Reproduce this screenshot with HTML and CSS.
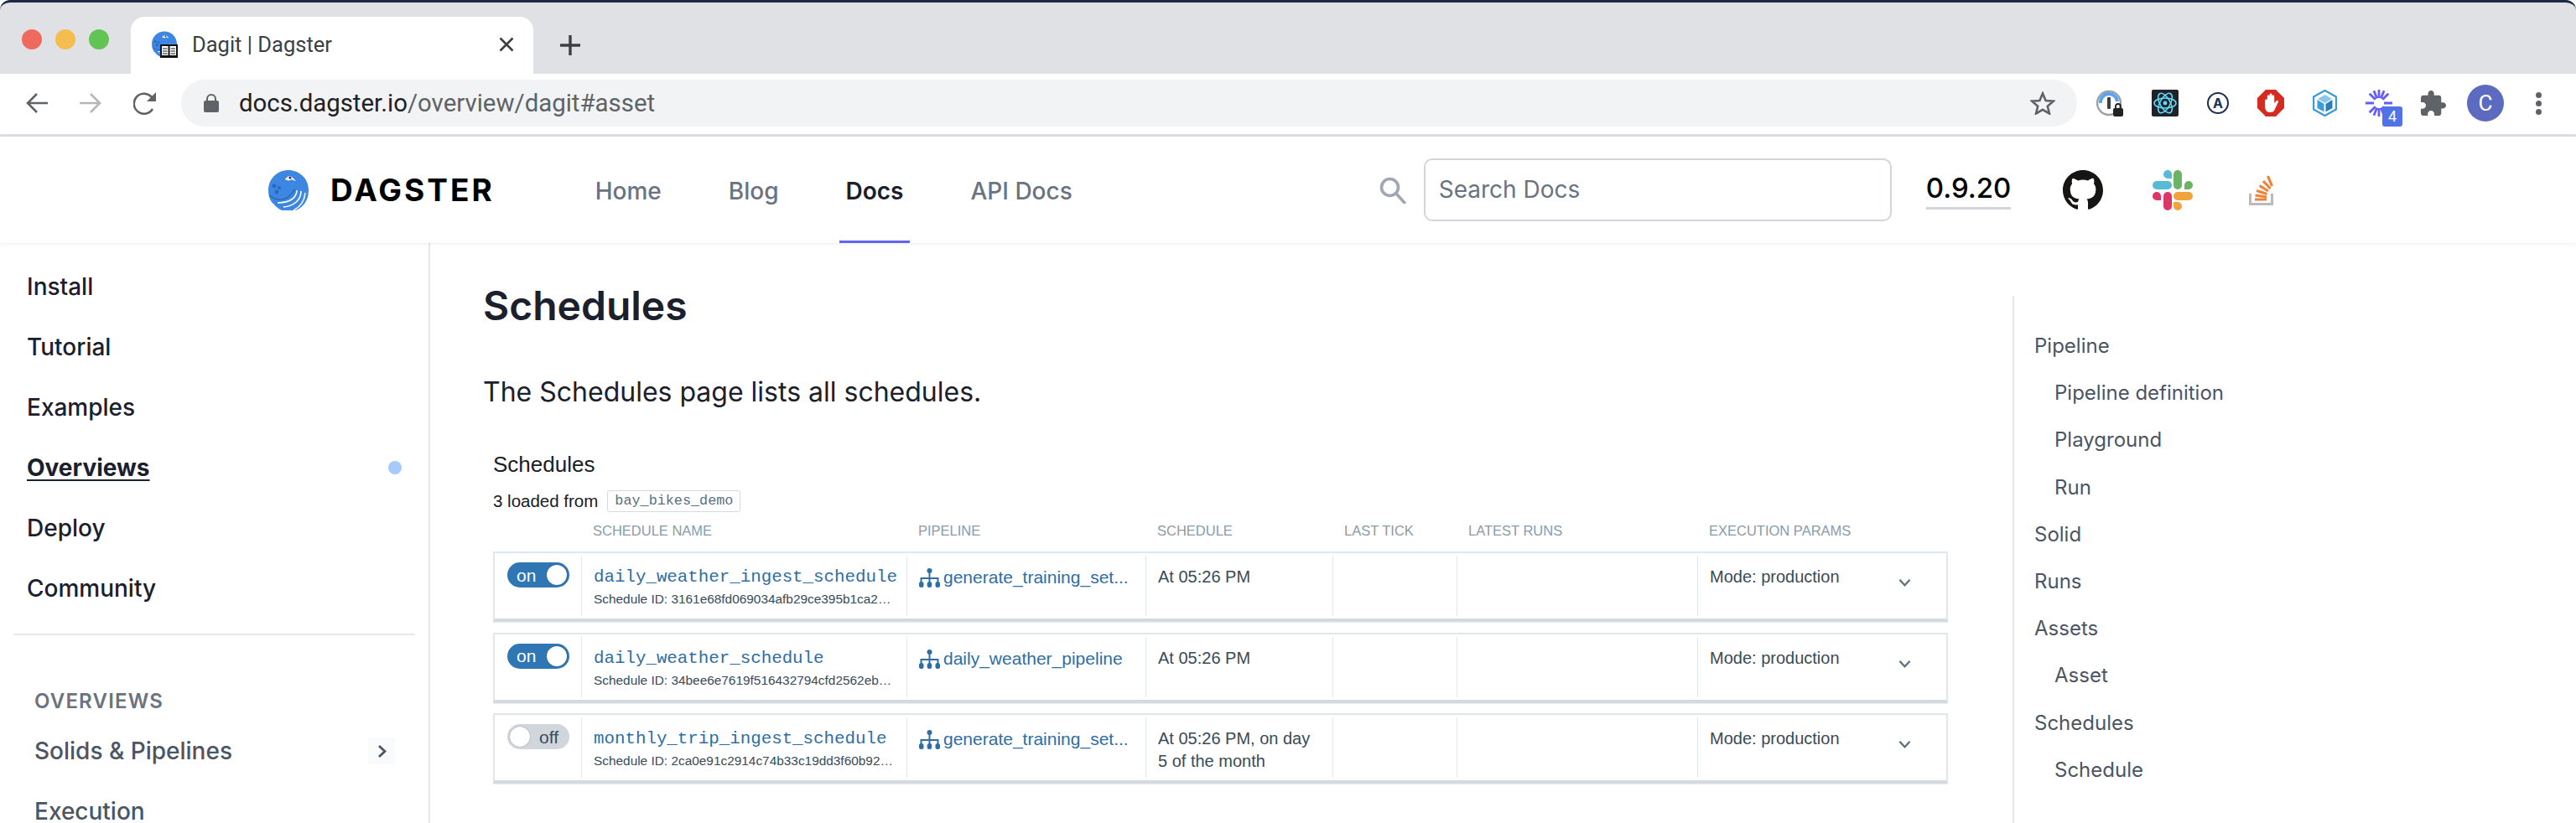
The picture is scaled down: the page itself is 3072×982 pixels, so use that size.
FILE: index.html
```html
<!DOCTYPE html>
<html>
  <head>
    <title>Dagit | Dagster</title>
    <link rel="stylesheet" href="styles.css">
  </head>
  <body>
    <svg class="defs" width="0" height="0">
      <symbol id="octopus" viewBox="0 0 48 48">
        <path d="M24 0C36 0 48 9 48 24C48 36 42 44 33 48H16C14 47 9 44 7 41C2 37 0 31 0 24C0 10 11 0 24 0Z" fill="#3d86e2"/>
        <path d="M2 30C8 37 20 37 27 29C29 27 30 24 32 23" fill="none" stroke="#2a67bd" stroke-width="1.5"/>
        <path d="M34 24C34 32 27 39 11 39" fill="none" stroke="#fff" stroke-width="1.6"/>
        <path d="M39 25C39 36 30 43 18 44" fill="none" stroke="#fff" stroke-width="1.6"/>
        <path d="M44 27C43 37 38 44 30 48" fill="none" stroke="#fff" stroke-width="1.6"/>
        <path d="M20 11C22 7 27 6 29 9L33 13C29 12 28 10 26 12C24 13 22 12 20 11Z" fill="#fff"/>
        <circle cx="26" cy="9" r="1.6" fill="#25324b"/>
        <circle cx="7" cy="19" r="2.4" fill="#2a67bd"/>
        <circle cx="13" cy="21" r="2" fill="#2a67bd"/>
        <circle cx="10" cy="26" r="2.4" fill="#2a67bd"/>
      </symbol>
      <symbol id="pipe" viewBox="0 0 25 23">
        <circle cx="12.5" cy="3" r="3" fill="#2f6ea5"/>
        <path d="M12.5 5v7M2.5 17v-5h20v5M12.5 12v5" fill="none" stroke="#2f6ea5" stroke-width="2"/>
        <rect x="0" y="16" width="5.5" height="7" rx="2.5" fill="#2f6ea5"/>
        <rect x="9.7" y="16" width="5.5" height="7" rx="2.5" fill="#2f6ea5"/>
        <rect x="19.5" y="16" width="5.5" height="7" rx="2.5" fill="#2f6ea5"/>
      </symbol>
      <symbol id="chev" viewBox="0 0 16 10">
        <path d="M1.5 1.5L8 8.5L14.5 1.5" fill="none" stroke="#5c7080" stroke-width="2.4"/>
      </symbol>
    </svg>

    <div class="tabstrip">
      <div class="lights">
        <span class="light red"></span><span class="light yellow"></span><span class="light green"></span>
      </div>
      <div class="tab">
        <span class="favicon">
          <svg width="30" height="31"><use href="#octopus"/></svg>
          <svg class="book" width="21" height="16" viewBox="0 0 21 16">
            <rect width="21" height="16" fill="#111"/>
            <rect x="2" y="2" width="7.5" height="11" fill="#fff"/>
            <rect x="11.5" y="2" width="7.5" height="11" fill="#fff"/>
            <path d="M3 5h5.5M3 8h5.5M3 11h5.5M12.5 5H18M12.5 8H18M12.5 11H18" stroke="#111"/>
          </svg>
        </span>
        <span class="tab-title">Dagit | Dagster</span>
        <svg class="tab-close" width="18" height="18" viewBox="0 0 18 18"><path d="M1.5 1.5L16.5 16.5M16.5 1.5L1.5 16.5" stroke="#3c4043" stroke-width="2.6"/></svg>
      </div>
      <svg class="new-tab" width="24" height="24" viewBox="0 0 24 24"><path d="M12 0V24M0 12H24" stroke="#3c4043" stroke-width="3.4"/></svg>
    </div>

    <div class="toolbar">
      <svg class="tool" width="26" height="26" viewBox="0 0 26 26"><path d="M26 13H3M13 2L2 13L13 24" fill="none" stroke="#5f6368" stroke-width="2.6"/></svg>
      <svg class="tool" width="26" height="26" viewBox="0 0 26 26"><path d="M0 13H23M13 2L24 13L13 24" fill="none" stroke="#b4b6b9" stroke-width="2.6"/></svg>
      <svg class="tool" width="28" height="27" viewBox="0 0 28 27"><path d="M23 20A12 12 0 1 1 21 5L25 9" fill="none" stroke="#5f6368" stroke-width="2.6"/><path d="M27 0V11H16Z" fill="#5f6368"/></svg>
      <div class="omnibox">
        <svg class="lock" width="18" height="22" viewBox="0 0 18 22"><path d="M4 9V6a5 5 0 0 1 10 0v3" fill="none" stroke="#5f6368" stroke-width="2"/><rect y="8" width="18" height="14" rx="2" fill="#5f6368"/></svg>
        <span class="url"><span class="url-host">docs.dagster.io</span>/overview/dagit#asset</span>
        <svg class="star" width="30" height="28" viewBox="0 0 30 28"><path d="M15 2.5L18.6 11L27.8 11.7L20.8 17.7L23 26.6L15 21.8L7 26.6L9.2 17.7L2.2 11.7L11.4 11Z" fill="none" stroke="#5f6368" stroke-width="2.6"/></svg>
      </div>
      <div class="extensions">
        <svg width="32" height="32" viewBox="0 0 32 32">
          <circle cx="15" cy="16" r="14" fill="none" stroke="#9aa0a6" stroke-width="2.4"/>
          <path d="M5 16A10 10 0 0 1 25 14" fill="none" stroke="#5aa2f5" stroke-width="4"/>
          <rect x="13" y="9" width="4" height="14" rx="1" fill="#3c4043"/>
          <rect x="20" y="22" width="12" height="10" rx="2" fill="#222"/>
          <path d="M23 23v-3a3 3 0 0 1 6 0v3" fill="none" stroke="#222" stroke-width="1.8"/>
        </svg>
        <svg width="32" height="32" viewBox="0 0 32 32">
          <rect width="32" height="32" rx="2" fill="#20232a"/>
          <g fill="none" stroke="#61dafb" stroke-width="1.5">
            <ellipse cx="16" cy="16" rx="13" ry="6"/>
            <ellipse cx="16" cy="16" rx="13" ry="6" transform="rotate(60 16 16)"/>
            <ellipse cx="16" cy="16" rx="13" ry="6" transform="rotate(120 16 16)"/>
          </g>
          <circle cx="16" cy="16" r="2.4" fill="#61dafb"/>
        </svg>
        <span class="apollo">A</span>
        <svg width="32" height="32" viewBox="0 0 32 32">
          <path d="M10 0H22L32 10V22L22 32H10L0 22V10Z" fill="#d42c20"/>
          <path d="M9 19V13a1.4 1.4 0 0 1 2.8 0V8a1.4 1.4 0 0 1 2.8 0V6a1.4 1.4 0 0 1 2.8 0V8a1.4 1.4 0 0 1 2.8 0V16L22.5 13.5a1.4 1.4 0 0 1 2.3 1.6L21 23C20 26 18 27 15 27C11 27 9 24 9 19Z" fill="#fff"/>
        </svg>
        <svg width="29" height="32" viewBox="0 0 29 32">
          <path d="M14.5 1L28 8.5V23.5L14.5 31L1 23.5V8.5Z" fill="#fff" stroke="#3f9bd5" stroke-width="2.4"/>
          <path d="M14.5 6L23 11L14.5 16L6 11Z" fill="#8cc6ea"/>
          <path d="M5.5 12L13.5 17V26.5L5.5 22Z" fill="#3f9bd5"/>
          <path d="M15.5 17L23.5 12V22L15.5 26.5Z" fill="#2b7fb8"/>
        </svg>
        <span class="loom">
          <svg width="32" height="32" viewBox="0 0 32 32">
            <g stroke="#625df5" stroke-width="2.8">
              <path d="M16 0V10M16 22V32M0 16H10M22 16H32M4.7 4.7L11.8 11.8M20.2 20.2L27.3 27.3M27.3 4.7L20.2 11.8M11.8 20.2L4.7 27.3M9.9 1.2L13.7 10.4M18.3 21.6L22.1 30.8M22.1 1.2L18.3 10.4M13.7 21.6L9.9 30.8"/>
            </g>
          </svg>
          <span class="loom-badge">4</span>
        </span>
        <svg width="30" height="30" viewBox="2 1 21 21"><path d="M20.5 11H19V7c0-1.1-.9-2-2-2h-4V3.5C13 2.12 11.88 1 10.5 1S8 2.12 8 3.5V5H4c-1.1 0-1.99.9-1.99 2v3.8H3.5c1.49 0 2.7 1.21 2.7 2.7s-1.21 2.7-2.7 2.7H2V20c0 1.1.9 2 2 2h3.8v-1.5c0-1.49 1.21-2.7 2.7-2.7 1.49 0 2.7 1.21 2.7 2.7V22H17c1.1 0 2-.9 2-2v-4h1.5c1.38 0 2.5-1.12 2.5-2.5S21.88 11 20.5 11z" fill="#5f6368"/></svg>
      </div>
      <span class="avatar">C</span>
      <span class="menu-dots"><i></i><i></i><i></i></span>
    </div>

    <header class="site-header">
      <a class="brand">
        <svg width="48" height="48"><use href="#octopus"/></svg>
        <span class="brand-name">DAGSTER</span>
      </a>
      <nav class="site-nav">
        <a>Home</a>
        <a>Blog</a>
        <a class="current">Docs</a>
        <a>API Docs</a>
      </nav>
      <svg class="search-icon" width="32" height="32" viewBox="0 0 32 32"><circle cx="12.5" cy="12.5" r="10" fill="none" stroke="#a0a6b2" stroke-width="3.6"/><path d="M20 20L30 31" stroke="#a0a6b2" stroke-width="3.6" stroke-linecap="round"/></svg>
      <div class="search-box">Search Docs</div>
      <span class="version">0.9.20</span>
      <svg class="gh" width="48" height="48" viewBox="0 0 16 16"><path fill="#161514" d="M8 0C3.58 0 0 3.58 0 8c0 3.54 2.29 6.53 5.47 7.59.4.07.55-.17.55-.38 0-.19-.01-.82-.01-1.49-2.01.37-2.53-.49-2.69-.94-.09-.23-.48-.94-.82-1.13-.28-.15-.68-.52-.01-.53.63-.01 1.08.58 1.23.82.72 1.21 1.87.87 2.33.66.07-.52.28-.87.51-1.07-1.78-.2-3.64-.89-3.64-3.95 0-.87.31-1.59.82-2.15-.08-.2-.36-1.02.08-2.12 0 0 .67-.21 2.2.82.64-.18 1.32-.27 2-.27.68 0 1.36.09 2 .27 1.53-1.04 2.2-.82 2.2-.82.44 1.1.16 1.92.08 2.12.51.56.82 1.27.82 2.15 0 3.07-1.87 3.75-3.65 3.95.29.25.54.73.54 1.48 0 1.07-.01 1.93-.01 2.2 0 .21.15.46.55.38A8.013 8.013 0 0016 8c0-4.42-3.58-8-8-8z"/></svg>
      <svg class="slack" width="48" height="48" viewBox="0 0 48 48">
        <path d="M18 0a5 5 0 0 0 0 10h5V5a5 5 0 0 0-5-5z" fill="#56bcd5"/>
        <rect x="0" y="13" width="23" height="10" rx="5" fill="#56bcd5"/>
        <rect x="25" y="0" width="10" height="23" rx="5" fill="#6ab464"/>
        <path d="M43 13a5 5 0 0 0-5 5v5h5a5 5 0 0 0 0-10z" fill="#6ab464"/>
        <rect x="25" y="26" width="23" height="10" rx="5" fill="#f2a33c"/>
        <path d="M25 38v5a5 5 0 1 0 5-5z" fill="#f2a33c"/>
        <rect x="13" y="26" width="10" height="22" rx="5" fill="#dc3566"/>
        <path d="M5 26a5 5 0 0 0 0 10h5v-5a5 5 0 0 0-5-5z" fill="#dc3566"/>
      </svg>
      <svg class="so" width="30" height="36" viewBox="0 0 30 36">
        <path d="M1.5 22V34.5H27.5V22" fill="none" stroke="#bcbbbb" stroke-width="3"/>
        <g stroke="#ef8236" stroke-width="3.2">
          <path d="M7 29H21M7.5 24L21 26M9 18.5L21.5 22.5M12.5 12.5L23 19M17 7L25.5 16M22.5 1L27.5 13"/>
        </g>
      </svg>
    </header>

    <div class="page">
      <aside class="sidebar">
        <ul class="top-links">
          <li>Install</li>
          <li>Tutorial</li>
          <li>Examples</li>
          <li class="active"><span>Overviews</span><i class="dot"></i></li>
          <li>Deploy</li>
          <li>Community</li>
        </ul>
        <div class="side-title">OVERVIEWS</div>
        <ul class="sub-links">
          <li>Solids &amp; Pipelines
            <span class="expand"><svg width="11" height="17" viewBox="0 0 11 17"><path d="M2 2L9 8.5L2 15" fill="none" stroke="#4b5563" stroke-width="2.8"/></svg></span>
          </li>
          <li>Execution</li>
        </ul>
      </aside>

      <main class="content">
        <h1>Schedules</h1>
        <p class="lead">The Schedules page lists all schedules.</p>

        <div class="shot">
          <div class="shot-title">Schedules</div>
          <div class="shot-sub">3 loaded from <code class="chip">bay_bikes_demo</code></div>
          <div class="cols col-heads">
            <span></span>
            <span>SCHEDULE NAME</span>
            <span>PIPELINE</span>
            <span>SCHEDULE</span>
            <span>LAST TICK</span>
            <span>LATEST RUNS</span>
            <span>EXECUTION PARAMS</span>
          </div>

          <div class="cols sched-row">
            <div class="cell"><span class="switch on"><b>on</b><i></i></span></div>
            <div class="cell">
              <a class="sched-name">daily_weather_ingest_schedule</a>
              <div class="sched-id">Schedule ID: 3161e68fd069034afb29ce395b1ca2…</div>
            </div>
            <div class="cell pipe-cell"><svg width="25" height="23"><use href="#pipe"/></svg><a>generate_training_set...</a></div>
            <div class="cell">At 05:26 PM</div>
            <div class="cell"></div>
            <div class="cell"></div>
            <div class="cell params">Mode: production<svg class="chev" width="15" height="10"><use href="#chev"/></svg></div>
          </div>

          <div class="cols sched-row">
            <div class="cell"><span class="switch on"><b>on</b><i></i></span></div>
            <div class="cell">
              <a class="sched-name">daily_weather_schedule</a>
              <div class="sched-id">Schedule ID: 34bee6e7619f516432794cfd2562eb…</div>
            </div>
            <div class="cell pipe-cell"><svg width="25" height="23"><use href="#pipe"/></svg><a>daily_weather_pipeline</a></div>
            <div class="cell">At 05:26 PM</div>
            <div class="cell"></div>
            <div class="cell"></div>
            <div class="cell params">Mode: production<svg class="chev" width="15" height="10"><use href="#chev"/></svg></div>
          </div>

          <div class="cols sched-row">
            <div class="cell"><span class="switch off"><i></i><b>off</b></span></div>
            <div class="cell">
              <a class="sched-name">monthly_trip_ingest_schedule</a>
              <div class="sched-id">Schedule ID: 2ca0e91c2914c74b33c19dd3f60b92…</div>
            </div>
            <div class="cell pipe-cell"><svg width="25" height="23"><use href="#pipe"/></svg><a>generate_training_set...</a></div>
            <div class="cell">At 05:26 PM, on day<br>5 of the month</div>
            <div class="cell"></div>
            <div class="cell"></div>
            <div class="cell params">Mode: production<svg class="chev" width="15" height="10"><use href="#chev"/></svg></div>
          </div>
        </div>
      </main>

      <aside class="toc">
        <a>Pipeline</a>
        <a class="indent">Pipeline definition</a>
        <a class="indent">Playground</a>
        <a class="indent">Run</a>
        <a>Solid</a>
        <a>Runs</a>
        <a>Assets</a>
        <a class="indent">Asset</a>
        <a>Schedules</a>
        <a class="indent">Schedule</a>
      </aside>
    </div>
  </body>
</html>
```

FILE: styles.css
```css
html, body {
  margin: 0;
  padding: 0;
  height: 982px;
  overflow: hidden;
  background: #fff;
  font-family: Inter, "Liberation Sans", sans-serif;
  color: #1a202c;
}

ul {
  list-style: none;
  margin: 0;
  padding: 0;
}

.defs {
  display: block;
  height: 0;
}

/* browser chrome */
.tabstrip {
  display: flex;
  align-items: flex-end;
  height: 85px;
  border-top: 3px solid #1c2a44;
  background: #dfe1e5;
  border-radius: 12px 12px 0 0;
}

.lights {
  display: flex;
  gap: 16px;
  align-self: flex-start;
  padding: 32px 0 0 26px;
  width: 156px;
  box-sizing: border-box;
}

.light {
  width: 24px;
  height: 24px;
  border-radius: 50%;
}

.red { background: #ee6a5f; }
.yellow { background: #f5bd4f; }
.green { background: #61c454; }

.tab {
  display: flex;
  align-items: center;
  box-sizing: border-box;
  width: 480px;
  height: 68px;
  padding: 0 23px 0 25px;
  background: #fff;
  border-radius: 16px 16px 0 0;
}

.favicon {
  position: relative;
  display: flex;
  width: 30px;
  height: 31px;
  margin-top: -3px;
}

.book {
  position: absolute;
  right: -1px;
  bottom: -1px;
}

.tab-title {
  flex: 1;
  margin-left: 18px;
  margin-top: -3px;
  font-family: Roboto, sans-serif;
  font-size: 25.5px;
  color: #3c4043;
}

.tab-close {
  margin-top: -3px;
}

.new-tab {
  margin: 0 0 22px 32px;
}

.toolbar {
  display: flex;
  align-items: center;
  box-sizing: border-box;
  height: 75px;
  padding: 0 0 2px 31px;
  background: #fff;
  border-bottom: 3px solid #dddee3;
}

.toolbar .tool {
  margin-right: 38px;
}

.toolbar .tool:nth-child(3) {
  margin-right: 29px;
}

.omnibox {
  display: flex;
  align-items: center;
  box-sizing: border-box;
  width: 2261px;
  height: 56px;
  padding: 0 26px 0 27px;
  background: #f1f3f4;
  border-radius: 28px;
}

.lock {
  margin-right: 24px;
}

.url {
  flex: 1;
  font-family: Roboto, sans-serif;
  font-size: 29.4px;
  color: #5f6368;
}

.url-host {
  color: #202124;
}

.extensions {
  display: flex;
  align-items: center;
  gap: 34px;
  margin-left: 23px;
}

.apollo {
  display: block;
  box-sizing: border-box;
  width: 26px;
  height: 26px;
  border: 2px solid #1c2f50;
  border-radius: 50%;
  font-size: 16px;
  font-weight: 700;
  line-height: 22px;
  text-align: center;
  color: #1c2f50;
}

.loom {
  position: relative;
  display: block;
  height: 32px;
}

.loom-badge {
  position: absolute;
  left: 20px;
  top: 20px;
  width: 24px;
  height: 24px;
  background: #5272e8;
  border-radius: 3px;
  color: #fff;
  font-family: Roboto, sans-serif;
  font-size: 18px;
  line-height: 24px;
  text-align: center;
}

.avatar {
  width: 44px;
  height: 44px;
  margin-left: 25px;
  background: #5c6bc0;
  border-radius: 50%;
  color: #fff;
  font-family: Roboto, sans-serif;
  font-size: 26px;
  line-height: 44px;
  text-align: center;
}

.menu-dots {
  display: flex;
  flex-direction: column;
  gap: 3px;
  margin-left: 38px;
}

.menu-dots i {
  width: 7px;
  height: 7px;
  background: #5f6368;
  border-radius: 50%;
}

/* docs header */
.site-header {
  position: relative;
  display: flex;
  align-items: center;
  box-sizing: border-box;
  height: 127px;
  padding-left: 320px;
  box-shadow: 0 1px 3px rgba(0, 0, 0, 0.08);
}

.brand {
  display: flex;
  align-items: center;
  gap: 26px;
}

.brand-name {
  font-size: 37px;
  font-weight: 700;
  letter-spacing: 3px;
  color: #000;
}

.site-nav {
  display: flex;
  align-self: stretch;
  gap: 64px;
  margin-left: 112px;
}

.site-nav a {
  display: flex;
  align-items: center;
  box-sizing: border-box;
  padding: 5px 8px 0;
  font-size: 28px;
  font-weight: 500;
  color: #6b7280;
  border-bottom: 3px solid transparent;
}

.site-nav a.current {
  font-weight: 600;
  color: #1a202c;
  border-bottom-color: #6366f1;
}

.search-icon {
  margin-left: 358px;
}

.search-box {
  box-sizing: border-box;
  width: 558px;
  height: 75px;
  margin-left: 21px;
  padding-left: 16px;
  border: 2px solid #d2d6dc;
  border-radius: 10px;
  font-size: 28px;
  line-height: 71px;
  color: #6b7280;
}

.version {
  margin-left: 41px;
  padding-bottom: 3px;
  border-bottom: 3px solid #d2d6dc;
  font-size: 33px;
  font-weight: 500;
  color: #000;
}

.gh { margin-left: 62px; }
.slack { margin-left: 59px; }
.so { margin-left: 67px; }

/* page body */
.page {
  display: flex;
}

.sidebar {
  box-sizing: border-box;
  width: 513px;
  height: 692px;
  padding: 16px 16px 0 16px;
  border-right: 2px solid #e5e7eb;
}

.top-links {
  padding-bottom: 18px;
  border-bottom: 2px solid #e5e7eb;
}

.top-links li {
  display: flex;
  align-items: center;
  justify-content: space-between;
  height: 72px;
  padding: 0 16px;
  font-size: 28px;
  font-weight: 500;
  color: #1a202c;
}

.top-links .active {
  font-weight: 700;
}

.top-links .active span {
  text-decoration: underline;
  text-underline-offset: 4px;
}

.dot {
  width: 16px;
  height: 16px;
  background: #a4cafe;
  border-radius: 50%;
}

.side-title {
  margin: 65px 0 0 25px;
  font-size: 24px;
  font-weight: 600;
  letter-spacing: 1.2px;
  line-height: 28px;
  color: #6b7280;
}

.sub-links {
  margin-top: 9px;
  padding: 0 24px 0 25px;
}

.sub-links li {
  display: flex;
  align-items: center;
  justify-content: space-between;
  height: 72px;
  font-size: 28px;
  font-weight: 500;
  color: #4b5563;
}

.expand {
  display: flex;
  align-items: center;
  justify-content: center;
  width: 32px;
  height: 32px;
  background: #f9fafb;
}

.content {
  box-sizing: border-box;
  width: 1887px;
  padding: 0 0 0 63px;
}

h1 {
  margin: 50px 0 0;
  font-size: 48px;
  font-weight: 600;
  line-height: 50px;
  color: #1a202c;
}

.lead {
  margin: 55px 0 0;
  font-size: 32px;
  line-height: 46px;
  color: #1a202c;
}

/* dagit screenshot inside the page */
.shot {
  width: 1735px;
  margin: 48px 0 0 12px;
  font-family: "Liberation Sans", Arial, sans-serif;
}

.shot-title {
  font-size: 26px;
  line-height: 30px;
  color: #182026;
}

.shot-sub {
  display: flex;
  align-items: center;
  gap: 7px;
  height: 26px;
  margin-top: 16px;
  font-size: 20.5px;
  color: #182026;
}

.chip {
  margin-left: 4px;
  padding: 0 8px;
  border: 1px solid #d5dae0;
  border-radius: 3px;
  font-family: "Liberation Mono", monospace;
  font-size: 16.8px;
  line-height: 24px;
  color: #5c7080;
}

.cols {
  display: grid;
  grid-template-columns: 104px 388px 285px 223px 148px 287px 1fr;
}

.col-heads {
  height: 18px;
  margin: 13px 0 16px;
  font-size: 16.5px;
  line-height: 18px;
  color: #8a9ba8;
}

.col-heads span {
  padding-left: 15px;
  white-space: nowrap;
}

.sched-row {
  box-sizing: border-box;
  height: 84px;
  margin-bottom: 12.5px;
  padding: 3px 0;
  border: 2px solid #e1e8ed;
  border-bottom-width: 4px;
  border-bottom-color: #d3dae0;
  font-size: 20px;
  line-height: 27px;
  color: #394b59;
  box-shadow: 0 1px 1px rgba(16, 22, 26, 0.08);
}

.cell {
  position: relative;
  box-sizing: border-box;
  padding: 12px 0 0 14px;
  border-right: 1px solid #e1e8ed;
}

.cell:first-child {
  padding: 8px 0 0 15px;
}

.cell:last-child {
  border-right: 0;
}

.switch {
  display: flex;
  align-items: center;
  justify-content: space-between;
  box-sizing: border-box;
  width: 74px;
  height: 30px;
  padding: 0 3px 0 11px;
  border-radius: 15px;
  font-size: 21px;
}

.switch b {
  font-weight: 400;
}

.switch i {
  width: 24px;
  height: 24px;
  background: #fff;
  border-radius: 50%;
  box-shadow: 0 0 1px rgba(16, 22, 26, 0.6);
}

.switch.on {
  background: #2f76b5;
  color: #fff;
}

.switch.off {
  padding: 0 13px 0 3px;
  background: #d0d6db;
  color: #394b59;
}

.sched-name {
  display: block;
  margin-top: 2px;
  font-family: "Liberation Mono", monospace;
  font-size: 20.8px;
  line-height: 24px;
  color: #2f6ea5;
  white-space: nowrap;
}

.sched-id {
  margin-top: 4px;
  font-size: 15.4px;
  line-height: 20px;
  white-space: nowrap;
  color: #394b59;
}

.pipe-cell {
  display: flex;
  align-items: flex-start;
  gap: 4px;
}

.pipe-cell svg {
  margin-top: 3px;
}

.pipe-cell a {
  color: #2f6ea5;
  font-size: 21px;
  white-space: nowrap;
}

.chev {
  position: absolute;
  left: 239px;
  top: 27px;
}

/* right side table of contents */
.toc {
  box-sizing: border-box;
  display: flex;
  flex-direction: column;
  width: 672px;
  height: 629px;
  margin-top: 63px;
  padding: 32px 0 0 24px;
  border-left: 2px solid #e5e7eb;
  font-size: 24px;
  color: #4b5563;
}

.toc a {
  height: 56.2px;
  line-height: 56px;
}

.toc .indent {
  padding-left: 24px;
}
```
